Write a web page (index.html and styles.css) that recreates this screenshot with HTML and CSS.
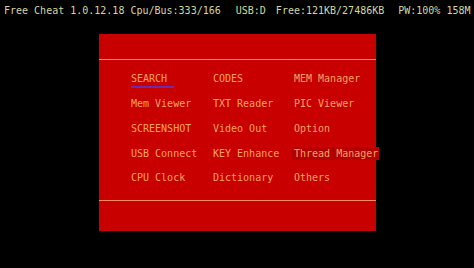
FILE: index.html
```html
<!DOCTYPE html>
<html>
<head>
<meta charset="utf-8">
<link rel="stylesheet" href="styles.css">
</head>
<body>
<div class="status">
  <span class="st-title">Free Cheat 1.0.12.18 Cpu/Bus:333/166</span>
  <span class="st-usb">USB:D</span>
  <span class="st-free">Free:121KB/27486KB</span>
  <span class="st-pw">PW:100% 158M</span>
</div>
<div class="panel">
  <div class="panel-top"></div>
  <div class="menu">
    <div class="item sel">SEARCH</div>
    <div class="item">CODES</div>
    <div class="item">MEM Manager</div>
    <div class="item">Mem Viewer</div>
    <div class="item">TXT Reader</div>
    <div class="item">PIC Viewer</div>
    <div class="item">SCREENSHOT</div>
    <div class="item">Video Out</div>
    <div class="item">Option</div>
    <div class="item">USB Connect</div>
    <div class="item">KEY Enhance</div>
    <div class="item"><span class="hl">Thread Manager</span></div>
    <div class="item">CPU Clock</div>
    <div class="item">Dictionary</div>
    <div class="item">Others</div>
  </div>
  <div class="panel-bottom"></div>
</div>
</body>
</html>
```
FILE: styles.css
```css
html, body {
  margin: 0;
  padding: 0;
  background: #000;
  width: 474px;
  height: 268px;
  overflow: hidden;
}
body {
  font-family: "DejaVu Sans Mono", monospace;
  font-size: 10px;
}
.status {
  display: flex;
  color: #d4d89c;
  height: 14px;
  line-height: 14px;
  padding-top: 4px;
  padding-left: 4px;
  white-space: pre;
}
.st-usb { margin-left: 15px; }
.st-free { margin-left: 10px; }
.st-pw { margin-left: 14px; }
.panel {
  margin-top: 16px;
  margin-left: 99px;
  width: 277px;
  height: 197px;
  background: #c80000;
  display: flex;
  flex-direction: column;
}
.panel-top {
  height: 25px;
  border-bottom: 1px solid #f88a60;
}
.menu {
  height: 140px;
  box-sizing: border-box;
  padding: 7px 0 9px 32px;
  display: grid;
  grid-template-columns: 82px 81px 1fr;
  grid-auto-rows: 24.75px;
  color: #f4a460;
  align-items: center;
}
.item {
  white-space: pre;
  line-height: 14px;
  position: relative;
}
.sel::after {
  content: "";
  position: absolute;
  left: 0;
  top: 14px;
  width: 43px;
  height: 2px;
  background: #6a2cb0;
}
.hl {
  background: #b40000;
  padding: 1px 1px 1px 2px;
  margin-left: -2px;
}
.panel-bottom {
  border-top: 1px solid #f88a60;
  flex: 1;
}
```
